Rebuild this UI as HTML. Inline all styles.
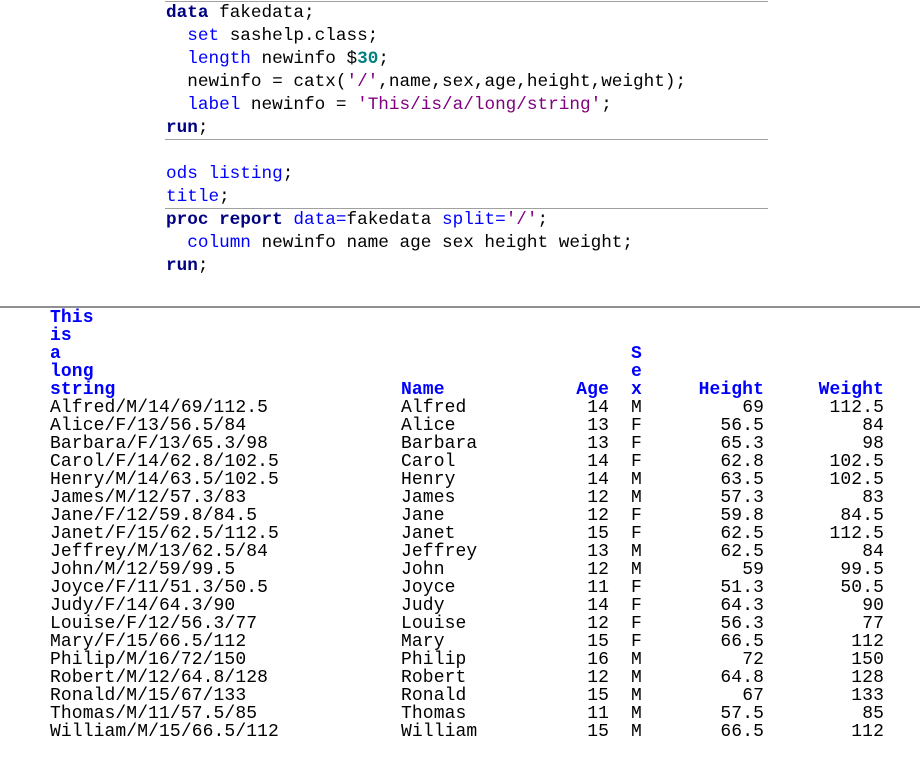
<!DOCTYPE html>
<html><head><style>
body{margin:0;width:920px;height:761px;background:#fff;position:relative;overflow:hidden}
.hl{position:absolute;left:165px;width:603px;height:1px;background:#a0a0a0}
.code{position:absolute;left:166px;font-family:"Liberation Mono",monospace;font-size:17.7px;line-height:23px;white-space:pre;color:#000}
.k{color:#000080;font-weight:bold}.b{color:#0000ff}.n{color:#008080;font-weight:bold}.s{color:#800080}
.col{position:absolute;top:309px;font-family:"Liberation Mono",monospace;font-size:18px;line-height:18px;white-space:pre;color:#000;letter-spacing:0.1px}
.h{color:#0000ff;font-weight:bold}
</style></head><body>
<div class="hl" style="top:1px"></div>
<div class="code" style="top:2px"><span class="k">data</span> fakedata;
  <span class="b">set</span> sashelp.class;
  <span class="b">length</span> newinfo $<span class="n">30</span>;
  newinfo = catx(<span class="s">'/'</span>,name,sex,age,height,weight);
  <span class="b">label</span> newinfo = <span class="s">'This/is/a/long/string'</span>;
<span class="k">run</span>;</div>
<div class="hl" style="top:139px"></div>
<div class="code" style="top:163px"><span class="b">ods listing</span>;
<span class="b">title</span>;
<span class="k">proc report</span> <span class="b">data=</span>fakedata <span class="b">split=</span><span class="s">'/'</span>;
  <span class="b">column</span> newinfo name age sex height weight;
<span class="k">run</span>;</div>
<div class="hl" style="top:208px"></div>
<div style="position:absolute;left:0;top:306px;width:920px;height:2px;background:#909090"></div>

<div class="col" style="left:50px"><span class="h">This
is
a
long
string</span>
Alfred/M/14/69/112.5
Alice/F/13/56.5/84
Barbara/F/13/65.3/98
Carol/F/14/62.8/102.5
Henry/M/14/63.5/102.5
James/M/12/57.3/83
Jane/F/12/59.8/84.5
Janet/F/15/62.5/112.5
Jeffrey/M/13/62.5/84
John/M/12/59/99.5
Joyce/F/11/51.3/50.5
Judy/F/14/64.3/90
Louise/F/12/56.3/77
Mary/F/15/66.5/112
Philip/M/16/72/150
Robert/M/12/64.8/128
Ronald/M/15/67/133
Thomas/M/11/57.5/85
William/M/15/66.5/112</div>

<div class="col" style="left:401px">



<span class="h">Name</span>
Alfred
Alice
Barbara
Carol
Henry
James
Jane
Janet
Jeffrey
John
Joyce
Judy
Louise
Mary
Philip
Robert
Ronald
Thomas
William</div>

<div class="col" style="right:311px;text-align:right">



<span class="h">Age</span>
14
13
13
14
14
12
12
15
13
12
11
14
12
15
16
12
15
11
15</div>

<div class="col" style="left:631px"><span class="h">

S
e
x</span>
M
F
F
F
M
M
F
F
M
M
F
F
F
F
M
M
M
M
M</div>

<div class="col" style="right:156px;text-align:right">



<span class="h">Height</span>
69
56.5
65.3
62.8
63.5
57.3
59.8
62.5
62.5
59
51.3
64.3
56.3
66.5
72
64.8
67
57.5
66.5</div>

<div class="col" style="right:36px;text-align:right">



<span class="h">Weight</span>
112.5
84
98
102.5
102.5
83
84.5
112.5
84
99.5
50.5
90
77
112
150
128
133
85
112</div>
</body></html>
